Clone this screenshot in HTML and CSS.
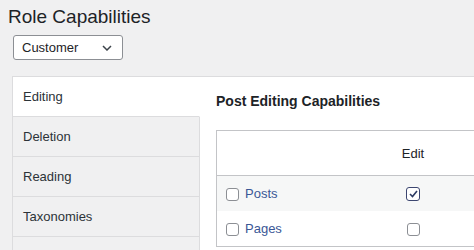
FILE: index.html
```html
<!DOCTYPE html>
<html lang="en">
<head>
    <meta charset="UTF-8">
    <meta name="viewport" content="width=device-width, initial-scale=1.0">
    <title>Role Capabilities</title>
    <link rel="stylesheet" href="styles.css">
</head>
<body>
    <div class="wrap">
        <h1>Role Capabilities</h1>
        <div class="role-select">
            <span>Customer</span>
            <svg class="chevron" width="10" height="6" viewBox="0 0 10 6"><path d="M1 1l4 4 4-4" fill="none" stroke="#3c434a" stroke-width="1.5"/></svg>
        </div>
        <div class="panel">
            <ul class="tabs">
                <li class="active">Editing</li>
                <li>Deletion</li>
                <li>Reading</li>
                <li>Taxonomies</li>
                <li></li>
            </ul>
            <div class="content">
                <h2>Post Editing Capabilities</h2>
                <table class="caps">
                    <thead>
                        <tr><th class="name-col"></th><th>Edit</th><th></th></tr>
                    </thead>
                    <tbody>
                        <tr class="alt">
                            <td><span class="box"></span><a href="#">Posts</a></td>
                            <td class="center"><span class="box checked"><svg width="9" height="8" viewBox="0 0 9 8"><path d="M1 4l2.5 2.5L8 1" fill="none" stroke="#2c3a63" stroke-width="1.6"/></svg></span></td>
                            <td></td>
                        </tr>
                        <tr>
                            <td><span class="box"></span><a href="#">Pages</a></td>
                            <td class="center"><span class="box"></span></td>
                            <td></td>
                        </tr>
                    </tbody>
                </table>
            </div>
        </div>
    </div>
</body>
</html>
```

FILE: styles.css
```css
body {
    margin: 0;
    background-color: #f0f0f1;
    font-family: "Liberation Sans", Arial, sans-serif;
    color: #1d2327;
    overflow: hidden;
}
.wrap {
    padding: 5px 0 0 8px;
    width: 620px;
}
h1 {
    font-size: 19px;
    font-weight: 400;
    margin: 0;
    line-height: 23px;
}
.role-select {
    margin: 7px 0 0 5px;
    border: 1px solid #8c8f94;
    border-radius: 3px;
    background: #fff;
    display: flex;
    align-items: center;
    justify-content: space-between;
    padding: 0 10px 0 8px;
    box-sizing: border-box;
    width: 110px;
    height: 25px;
    font-size: 13px;
}
.panel {
    margin: 16px 0 0 4px;
    background: #fff;
    border: 1px solid #dcdcde;
    display: flex;
    height: 200px;
}
.tabs {
    list-style: none;
    margin: 0;
    padding: 0;
    width: 187px;
    flex-shrink: 0;
}
.tabs li {
    height: 39px;
    line-height: 39px;
    padding-left: 10px;
    font-size: 13px;
    color: #2c3338;
    background: #f0f0f1;
    border-bottom: 1px solid #dcdcde;
    border-right: 1px solid #dcdcde;
}
.tabs li.active {
    background: #fff;
    border-right-color: #fff;
}
.content {
    padding-left: 16px;
}
h2 {
    font-size: 14px;
    font-weight: 700;
    margin: 16px 0 0;
    line-height: 16px;
}
.caps {
    margin-top: 21px;
    border-collapse: collapse;
    border: 1px solid #c3c4c7;
    width: 320px;
    font-size: 13px;
}
.caps th {
    height: 44px;
    font-weight: 400;
    border-bottom: 1px solid #c3c4c7;
    padding: 0;
}
.caps .name-col {
    width: 156px;
}
.caps th:nth-child(2) {
    width: 80px;
}
.caps td {
    height: 35px;
    padding: 0 0 0 9px;
}
.caps td.center {
    text-align: center;
    padding: 0;
}
.caps tr.alt td {
    background: #f6f7f7;
}
.caps a {
    color: #3a5796;
    text-decoration: none;
    vertical-align: middle;
}
.box {
    display: inline-flex;
    align-items: center;
    justify-content: center;
    width: 13px;
    height: 13px;
    border: 1px solid #8c8f94;
    border-radius: 3px;
    background: #fff;
    vertical-align: middle;
    margin-right: 6px;
    box-sizing: border-box;
}
.center .box {
    margin-right: 0;
}
.box.checked {
    border: 1.5px solid #3c4670;
    width: 14px;
    height: 14px;
}
```
